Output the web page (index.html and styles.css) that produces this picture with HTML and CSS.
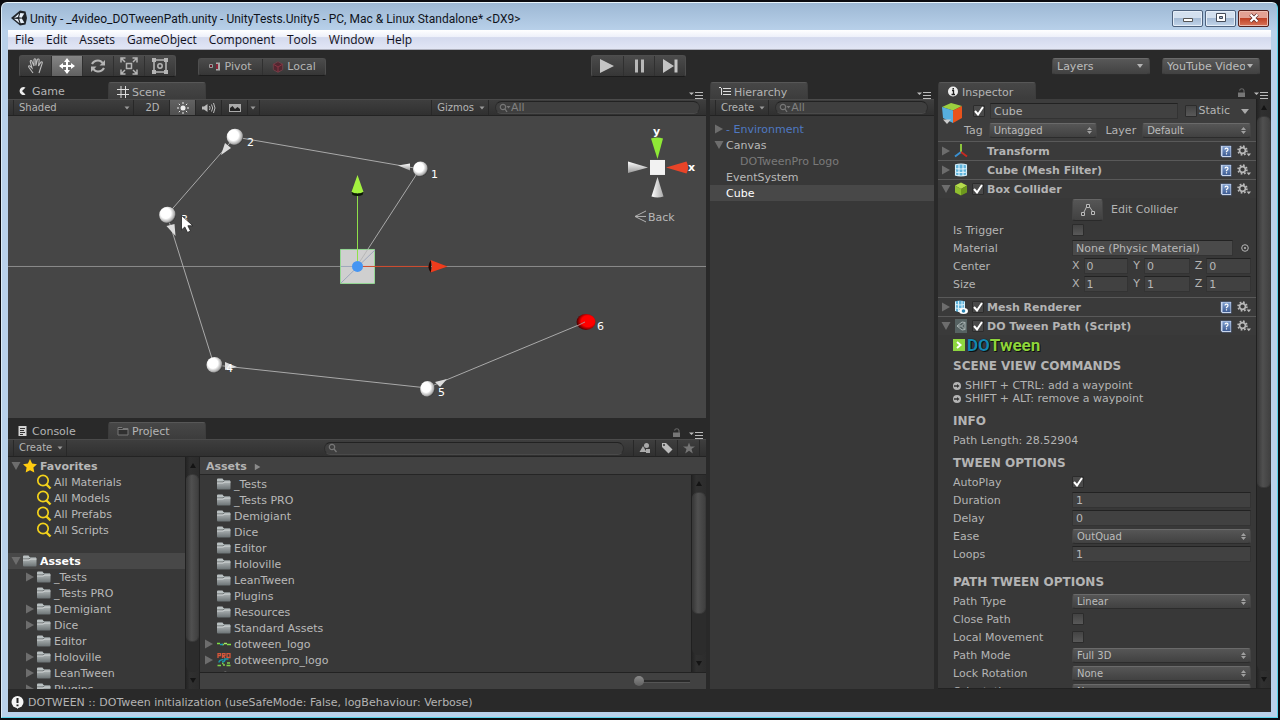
FILE: index.html
```html
<!DOCTYPE html>
<html lang="en">
<head>
<meta charset="utf-8">
<title>Unity - _4video_DOTweenPath.unity</title>
<link rel="stylesheet" href="styles.css">
</head>
<body>
<svg class="defs" aria-hidden="true">
  <defs>
    <linearGradient id="g-folder" x1="0" y1="0" x2="0" y2="1"><stop offset="0" stop-color="#b4babb"/><stop offset="1" stop-color="#6c7375"/></linearGradient>
    <linearGradient id="g-book" x1="0" y1="0" x2="0" y2="1"><stop offset="0" stop-color="#7f9fd0"/><stop offset="1" stop-color="#3e5c93"/></linearGradient>
    <linearGradient id="g-cone-h" x1="0" y1="0" x2="0" y2="1"><stop offset="0" stop-color="#fff"/><stop offset="1" stop-color="#999"/></linearGradient>
    <linearGradient id="g-cone-v" x1="0" y1="0" x2="1" y2="0"><stop offset="0" stop-color="#fff"/><stop offset="1" stop-color="#a8a8a8"/></linearGradient>
    <radialGradient id="g-ball" cx=".4" cy=".4" r=".62"><stop offset=".5" stop-color="#fff"/><stop offset=".85" stop-color="#aaa"/><stop offset="1" stop-color="#333"/></radialGradient>
    <radialGradient id="g-red" cx=".6" cy=".45" r=".62"><stop offset=".55" stop-color="#f00"/><stop offset="1" stop-color="#300"/></radialGradient>
  </defs>
  <symbol id="folder" viewBox="0 0 14 12"><path d="M0 1.500Q0 .500 1 .500h4.500l1 1.500H13v2H0z" fill="#b9c0c1"/><path d="M0 3.200h13.500v7.300q0 1-1 1H1q-1 0-1-1z" fill="url(#g-folder)"/><path d="M0 4h6l1-1.200h6.500" fill="none" stroke="#4b5052" stroke-width=".7"/><path d="M0 5h6.500l1-1h6" fill="none" stroke="#dde1e2" stroke-width=".8"/></symbol>
  <symbol id="lens" viewBox="0 0 16 16"><circle cx="7" cy="6.500" r="5.200" fill="none" stroke="#f3d21b" stroke-width="1.700"/><path d="M10.500 10.500l4 4" stroke="#f3d21b" stroke-width="2.400"/></symbol>
  <symbol id="search" viewBox="0 0 12 10"><circle cx="4" cy="4" r="2.700" fill="none" stroke="#777" stroke-width="1.200"/><path d="M6 6l2.500 3" stroke="#777" stroke-width="1.300"/></symbol>
  <symbol id="search-menu" viewBox="0 0 12 10"><circle cx="4" cy="4" r="2.700" fill="none" stroke="#777" stroke-width="1.200"/><path d="M6 6l2 3" stroke="#777" stroke-width="1.300"/><path d="M7.500 3h4l-2 2.500z" fill="#777"/></symbol>
  <symbol id="closed" viewBox="0 0 10 10"><path d="M1 .500v9l8-4.500z" fill="#6d6d6d"/></symbol>
  <symbol id="open" viewBox="0 0 10 10"><path d="M.500 1h9L5 9z" fill="#6d6d6d"/></symbol>
  <symbol id="drop" viewBox="0 0 6 4"><path d="M.500.500h5L3 3.500z" fill="#999"/></symbol>
  <symbol id="panel-menu" viewBox="0 0 14 8"><path d="M0 1.500h5L2.500 4z" fill="#bbb"/><path d="M6 1.500h8M6 4.500h8M6 7.500h8" stroke="#bbb"/></symbol>
  <symbol id="lock" viewBox="0 0 9 10"><path d="M1 4.500h7V9H1z" fill="#777"/><path d="M7 5V2.500Q6.500.700 4.800.700T2.500 2.500" fill="none" stroke="#666" stroke-width="1.100"/></symbol>
  <symbol id="book" viewBox="0 0 12 13"><path d="M.500.500h10l1 1v11h-9l-2-1.500z" fill="#c9d6ec" stroke="#222c42" stroke-width=".6"/><path d="M2.500 1.500h8v9.500h-8z" fill="url(#g-book)"/><path d="M5 4.500q0-1.300 1.500-1.300T8 4.600 6.500 6.300v1M6.500 8.300v1.200" fill="none" stroke="#fff" stroke-width="1.200"/></symbol>
  <symbol id="gear" viewBox="0 0 14 12"><circle cx="5.500" cy="5.500" r="2.900" fill="none" stroke="#b8b8b8" stroke-width="1.600"/><circle cx="5.500" cy="5.500" r="4.400" fill="none" stroke="#b8b8b8" stroke-width="1.700" stroke-dasharray="1.700 1.756"/><path d="M9.500 8.500H14l-2.200 2.800z" fill="#b8b8b8"/></symbol>
  <symbol id="arrow-disc" viewBox="0 0 8 8"><circle cx="4" cy="4" r="4" fill="#b4b4b4"/><path d="M1 3.300h3V2L6.500 4 4 6V4.700H1z" fill="#333"/></symbol>
</svg>

<div class="window">
  <header class="titlebar">
    <svg class="app-icon" viewBox="0 0 16 16" width="16" height="16"><path d="M0 8L9 .500l5.500 1L16 8l-1.500 6.500-5.500 1z" fill="#20242a"/><path d="M3 8l5-4.500L7 7zM3 8.700l4 .300 1.500 4.300zM9.300 3l4 .500-2.600 4.200-2.600-.400zM8.200 8.800l2.600-.300 2.600 4.300-3.700.500z" fill="#e8f1fa"/></svg>
    <h1 class="title">Unity - _4video_DOTweenPath.unity - UnityTests.Unity5 - PC, Mac &amp; Linux Standalone* &lt;DX9&gt;</h1>
    <button class="win-btn" aria-label="Minimize"><svg viewBox="0 0 12 10" width="12" height="10"><path d="M1.500 5.500h9v3h-9z" fill="#fff" stroke="#555"/></svg></button>
    <button class="win-btn" aria-label="Maximize"><svg viewBox="0 0 12 10" width="12" height="10"><path d="M1.500.500h9v8h-9z" fill="#fff" stroke="#444b58"/><path d="M4.500 3.500h3v2h-3z" fill="#9fb4cf" stroke="#444b58"/></svg></button>
    <button class="win-btn win-close" aria-label="Close"><svg viewBox="0 0 12 10" width="12" height="10"><path d="M2.500 1.500l7 7M9.500 1.500l-7 7" stroke="#5c2a26" stroke-width="3.600"/><path d="M2.500 1.500l7 7M9.500 1.500l-7 7" stroke="#fff" stroke-width="2.200"/></svg></button>
  </header>
  <nav class="menubar">
    <button>File</button><button>Edit</button><button>Assets</button><button>GameObject</button><button>Component</button><button>Tools</button><button>Window</button><button>Help</button>
  </nav>

  <div class="app">
    <div class="toolbar">
      <div class="toolbar-side">
        <div class="btn-group tools">
          <button aria-label="Hand"><svg viewBox="0 0 18 18" width="18" height="18"><path d="M6 16L2 10.500Q1 8.500 2.500 8.700L5 11 3.200 4.500Q3.500 3 4.700 3.800L7 9V2.500Q7.800 1 8.800 2.500V8.500L10.500 2.200Q12 1.500 12.200 3L11.500 9 14 5Q15.500 4.500 15.300 6L13 13l-1 3" fill="none" stroke="#bdbdbd" stroke-width="1.100"/></svg></button>
          <button class="active" aria-label="Move"><svg viewBox="0 0 16 16" width="16" height="16"><path d="M8 1v14M1 8h14" stroke="#fff" stroke-width="2"/><path d="M8 0l3 4H5zM8 16l3-4H5zM0 8l4-3v6zM16 8l-4-3v6z" fill="#fff"/></svg></button>
          <button aria-label="Rotate"><svg viewBox="0 0 16 16" width="16" height="16"><path d="M2 6Q4 2.500 8 2.500q3 0 4.500 2.500M14 10q-2 3.500-6 3.500-3 0-4.500-2.500" fill="none" stroke="#b5b5b5" stroke-width="2.200"/><path d="M15 2v5.500H9.500zM1 14V8.500h5.500z" fill="#b5b5b5"/></svg></button>
          <button aria-label="Scale"><svg viewBox="0 0 18 18" width="18" height="18"><path d="M6.500 6.500h5v5h-5z" fill="none" stroke="#b5b5b5" stroke-width="1.500"/><path d="M1 5.500V1h4.500M12.500 1H17v4.500M17 12.500V17h-4.500M5.500 17H1v-4.500M1 1l4 4M17 1l-4 4M17 17l-4-4M1 17l4-4" fill="none" stroke="#b5b5b5" stroke-width="1.500"/></svg></button>
          <button aria-label="Rect"><svg viewBox="0 0 18 18" width="18" height="18"><path d="M3 3h12v12H3z" fill="none" stroke="#b5b5b5" stroke-width="1.600"/><circle cx="9" cy="9" r="2.200" fill="none" stroke="#b5b5b5" stroke-width="1.500"/><path d="M1 1h4v4H1zM13 1h4v4h-4zM1 13h4v4H1zM13 13h4v4h-4z" fill="#b5b5b5"/></svg></button>
        </div>
        <div class="btn-group pivots">
          <button><svg viewBox="0 0 12 10" width="12" height="10"><path d="M.500 2.500h3v3h-3z" fill="#6d1a2a" stroke="#999"/><path d="M7 .500h4v8H7z" fill="#aaa"/><path d="M7 2h2v5H7z" fill="#8d2438"/></svg>Pivot</button>
          <button><svg viewBox="0 0 12 12" width="12" height="12"><path d="M6 .700l4.700 2.500v5.500L6 11.300 1.300 8.700V3.200z" fill="#532630" stroke="#6d4048"/><path d="M1.300 3.200L6 6l4.700-2.800M6 6v5" fill="none" stroke="#8a3443"/></svg>Local</button>
        </div>
      </div>
      <div class="btn-group play">
        <button aria-label="Play"><svg viewBox="0 0 16 14" width="16" height="14"><path d="M1 0v14l14-7z" fill="#c4c4c4"/></svg></button>
        <button aria-label="Pause"><svg viewBox="0 0 16 14" width="16" height="14"><path d="M4 .500h3v13H4zM10 .500h3v13h-3z" fill="#b9b9b9"/></svg></button>
        <button aria-label="Step"><svg viewBox="0 0 16 14" width="16" height="14"><path d="M1 0v14l11-7zM12.500.500h3v13h-3z" fill="#c4c4c4"/></svg></button>
      </div>
      <div class="toolbar-side end">
        <select class="drop top-drop" aria-label="Layers"><option>Layers</option></select>
        <select class="drop top-drop" aria-label="Layout"><option>YouTube Video</option></select>
      </div>
    </div>

    <main class="workspace">
      <div class="left-column">
        <section class="panel scene-panel">
          <div class="tabs">
            <button class="tab"><svg viewBox="0 0 12 12" width="12" height="12"><path d="M8.500 2.500A4 4 0 1 0 8.500 9.500L5 6z" fill="#eee"/></svg>Game</button>
            <button class="tab active"><svg viewBox="0 0 12 12" width="12" height="12"><path d="M4 0v12M8.500 0v12M0 3.500h12M0 8.500h12" stroke="#ddd"/></svg>Scene</button>
            <svg class="tab-menu" viewBox="0 0 14 8" width="14" height="8"><use href="#panel-menu"/></svg>
          </div>
          <div class="bar scene-bar">
            <button class="bar-btn shaded">Shaded<svg viewBox="0 0 6 4" width="6" height="4"><use href="#drop"/></svg></button>
            <button class="bar-btn two-d">2D</button>
            <button class="bar-btn icon on" aria-label="Lighting"><svg viewBox="0 0 12 12" width="12" height="12"><circle cx="6" cy="6" r="2.500" fill="#eee"/><path d="M6 0v2M6 10v2M0 6h2M10 6h2M1.800 1.800l1.300 1.300M8.900 8.900l1.300 1.300M1.800 10.200l1.300-1.300M8.900 3.100l1.300-1.300" stroke="#eee"/></svg></button>
            <button class="bar-btn icon" aria-label="Audio"><svg viewBox="0 0 14 12" width="14" height="12"><path d="M0 4.500h2L5.500 2v8L2 7.500H0z" fill="#bbb"/><path d="M7.500 4q1.200 2 0 4M9.500 2.500q2.400 3.500 0 7M11.500 1q3 5 0 10" fill="none" stroke="#bbb"/></svg></button>
            <button class="bar-btn icon" aria-label="Effects"><svg viewBox="0 0 12 10" width="12" height="10"><path d="M0 1h12v8H0z" fill="#aaa"/><path d="M1 8V5l2.500-2L6 6l2.500-2L11 6V2v6z" fill="#222"/></svg></button>
            <button class="bar-btn tiny" aria-label="Effects menu"><svg viewBox="0 0 6 4" width="6" height="4"><use href="#drop"/></svg></button>
            <span class="grow"></span>
            <button class="bar-btn">Gizmos<svg viewBox="0 0 6 4" width="6" height="4"><use href="#drop"/></svg></button>
            <label class="search scene-search"><svg viewBox="0 0 12 10" width="12" height="10"><use href="#search-menu"/></svg><input type="text" value="All" aria-label="Search scene"></label>
          </div>
          <svg class="scene" viewBox="8 116 698 302" preserveAspectRatio="xMidYMid slice">
            <path d="M0 266.500h720" stroke="#8d8d8d"/>
            <path d="M340.500 249.500h34v34h-34z" fill="#cfcfcf" stroke="#93d893"/>
            <path d="M341 283l34-33M341 266.500h16" stroke="#9ea7bb" fill="none"/>
            <path d="M357 266L420 169 235 137 167 215 214 365 427 388 586 322" fill="none" stroke="#b4b4b4" stroke-width=".9"/>
            <path d="M357.500 266V193" stroke="#8fe04a"/><path d="M357.500 175l6 17q-6 3-12 0z" fill="#a3f23f"/><path d="M351.500 192q6 3 12 0l-1 3q-5 2-10 0z" fill="#0b1c02"/>
            <path d="M357 266.500h73" stroke="#cf4a2c"/><path d="M431 260q-5 6.500 0 13z" fill="#210500"/><path d="M430.500 260l17 6.500-17 6q3-6 0-12.500z" fill="#f03c1c"/>
            <circle cx="357.500" cy="266.500" r="5.500" fill="#4595f2"/>
            <path d="M398 165.500l12-2v7z" fill="url(#g-cone-h)"/><path d="M221 155l4-12 6 5z" fill="#ddd"/><path d="M166.500 226l8-2 1 12z" fill="#ddd"/><path d="M225 362v8l12-3z" fill="#ddd"/><path d="M435 382l12-3-7 8z" fill="#ddd"/>
            <circle cx="420.500" cy="169" r="7.500" fill="url(#g-ball)"/><circle cx="235" cy="137" r="8.300" fill="url(#g-ball)"/><circle cx="167.500" cy="215" r="8.300" fill="url(#g-ball)"/><circle cx="214.500" cy="365" r="8" fill="url(#g-ball)"/><ellipse cx="427.500" cy="389" rx="7.300" ry="8" fill="url(#g-ball)"/><ellipse cx="586" cy="322" rx="9.500" ry="8" fill="url(#g-red)"/>
            <path d="M577 326l8-4" stroke="#b88"/>
            <g class="node-label"><text x="431" y="178">1</text><text x="247" y="146">2</text><text x="181" y="223">3</text><text x="226" y="372">4</text><text x="438" y="396">5</text><text x="597" y="330">6</text></g>
            <path d="M181.500 215.500v14.500l3.300-3 2.700 5.500 3-1.400-2.600-5.300h5z" fill="#fff" stroke="#222" stroke-width=".8"/>
            <path d="M651 138.500q6-2 12 0L657.500 159z" fill="#8fe836"/><path d="M686.500 161.500q3 6 0 12L666 167.500z" fill="#e84428"/><path d="M628 161.500l20 6-20 5.500z" fill="url(#g-cone-h)"/><path d="M657.500 177l6 19.500q-6 2-12 0z" fill="url(#g-cone-v)"/><path d="M650 160h15v15h-15z" fill="#f2f2f2"/>
            <g class="axis-label"><text x="653" y="135">y</text><text x="688" y="171">x</text></g>
            <path d="M646 211l-11 5.500 11 5.500M635 216.500h11" fill="none" stroke="#b2b2b2"/>
            <text class="view-label" x="648" y="221">Back</text>
          </svg>
        </section>

        <section class="panel project-panel">
          <div class="tabs">
            <button class="tab"><svg viewBox="0 0 12 12" width="12" height="12"><path d="M1.500 1h8v10h-8z" fill="#d5d5d5"/><path d="M3 3.500h5M3 5.500h4M3 7.500h5M3 9.500h3" stroke="#333"/></svg>Console</button>
            <button class="tab active"><svg viewBox="0 0 12 12" width="12" height="12"><path d="M1 2.500h4l1 1h5v6.500H1z" fill="#303030" stroke="#777"/><path d="M1 4.500h10" stroke="#777"/></svg>Project</button>
            <svg class="tab-lock" viewBox="0 0 9 10" width="9" height="10"><use href="#lock"/></svg>
            <svg class="tab-menu" viewBox="0 0 14 8" width="14" height="8"><use href="#panel-menu"/></svg>
          </div>
          <div class="bar project-bar">
            <button class="bar-btn">Create<svg viewBox="0 0 6 4" width="6" height="4"><use href="#drop"/></svg></button>
            <span class="grow"></span>
            <label class="search project-search"><svg viewBox="0 0 12 10" width="12" height="10"><use href="#search"/></svg><input type="text" aria-label="Search project"></label>
            <button class="bar-btn icon" aria-label="Filter by type"><svg viewBox="0 0 12 12" width="12" height="12"><circle cx="7.500" cy="3.500" r="2.500" fill="#aaa"/><path d="M4 4l3.500 6H.500zM7 7h4v4H7z" fill="#aaa"/></svg></button>
            <button class="bar-btn icon" aria-label="Filter by label"><svg viewBox="0 0 12 12" width="12" height="12"><path d="M1 1h4l6.500 6.500-4 4L1 5z" fill="#bbb"/><circle cx="3" cy="3" r="1" fill="#333"/></svg></button>
            <button class="bar-btn icon" aria-label="Save search"><svg viewBox="0 0 12 12" width="12" height="12"><path d="M6 .500l1.500 4H12L8.500 7l1.300 4.500L6 8.800 2.200 11.500 3.500 7 0 4.500h4.500z" fill="#757575"/></svg></button>
          </div>
          <div class="project-body">
            <div class="tree-wrap">
              <ul class="list tree">
                <li class="row strong"><svg class="fold" viewBox="0 0 10 10"><use href="#open"/></svg><svg class="ico" viewBox="0 0 14 14"><path d="M7 0l2.100 4.600 4.900.600-3.600 3.400.900 5L7 11.200 2.700 13.600l.900-5L0 5.200l4.900-.600z" fill="#fc1"/></svg>Favorites</li>
                <li class="row child lens"><svg class="ico" viewBox="0 0 16 16"><use href="#lens"/></svg>All Materials</li>
                <li class="row child lens"><svg class="ico" viewBox="0 0 16 16"><use href="#lens"/></svg>All Models</li>
                <li class="row child lens"><svg class="ico" viewBox="0 0 16 16"><use href="#lens"/></svg>All Prefabs</li>
                <li class="row child lens"><svg class="ico" viewBox="0 0 16 16"><use href="#lens"/></svg>All Scripts</li>
                <li class="row strong selected spaced"><svg class="fold" viewBox="0 0 10 10"><use href="#open"/></svg><svg class="ico" viewBox="0 0 14 12"><use href="#folder"/></svg>Assets</li>
                <li class="row child"><svg class="fold" viewBox="0 0 10 10"><use href="#closed"/></svg><svg class="ico" viewBox="0 0 14 12"><use href="#folder"/></svg>_Tests</li>
                <li class="row child"><svg class="fold"></svg><svg class="ico" viewBox="0 0 14 12"><use href="#folder"/></svg>_Tests PRO</li>
                <li class="row child"><svg class="fold" viewBox="0 0 10 10"><use href="#closed"/></svg><svg class="ico" viewBox="0 0 14 12"><use href="#folder"/></svg>Demigiant</li>
                <li class="row child"><svg class="fold" viewBox="0 0 10 10"><use href="#closed"/></svg><svg class="ico" viewBox="0 0 14 12"><use href="#folder"/></svg>Dice</li>
                <li class="row child"><svg class="fold"></svg><svg class="ico" viewBox="0 0 14 12"><use href="#folder"/></svg>Editor</li>
                <li class="row child"><svg class="fold" viewBox="0 0 10 10"><use href="#closed"/></svg><svg class="ico" viewBox="0 0 14 12"><use href="#folder"/></svg>Holoville</li>
                <li class="row child"><svg class="fold" viewBox="0 0 10 10"><use href="#closed"/></svg><svg class="ico" viewBox="0 0 14 12"><use href="#folder"/></svg>LeanTween</li>
                <li class="row child"><svg class="fold" viewBox="0 0 10 10"><use href="#closed"/></svg><svg class="ico" viewBox="0 0 14 12"><use href="#folder"/></svg>Plugins</li>
              </ul>
              <div class="scrollbar slim"><span class="up"></span><span class="track"><span class="thumb" style="height:85%"></span></span><span class="down"></span></div>
            </div>
            <div class="assets">
              <div class="crumb">Assets<svg viewBox="0 0 10 10" width="8" height="8"><path d="M1 1v8l7-4z" fill="#8a8a8a"/></svg></div>
              <div class="assets-wrap">
                <ul class="list files">
                  <li class="row"><svg class="fold"></svg><svg class="ico" viewBox="0 0 14 12"><use href="#folder"/></svg>_Tests</li>
                  <li class="row"><svg class="fold"></svg><svg class="ico" viewBox="0 0 14 12"><use href="#folder"/></svg>_Tests PRO</li>
                  <li class="row"><svg class="fold"></svg><svg class="ico" viewBox="0 0 14 12"><use href="#folder"/></svg>Demigiant</li>
                  <li class="row"><svg class="fold"></svg><svg class="ico" viewBox="0 0 14 12"><use href="#folder"/></svg>Dice</li>
                  <li class="row"><svg class="fold"></svg><svg class="ico" viewBox="0 0 14 12"><use href="#folder"/></svg>Editor</li>
                  <li class="row"><svg class="fold"></svg><svg class="ico" viewBox="0 0 14 12"><use href="#folder"/></svg>Holoville</li>
                  <li class="row"><svg class="fold"></svg><svg class="ico" viewBox="0 0 14 12"><use href="#folder"/></svg>LeanTween</li>
                  <li class="row"><svg class="fold"></svg><svg class="ico" viewBox="0 0 14 12"><use href="#folder"/></svg>Plugins</li>
                  <li class="row"><svg class="fold"></svg><svg class="ico" viewBox="0 0 14 12"><use href="#folder"/></svg>Resources</li>
                  <li class="row"><svg class="fold"></svg><svg class="ico" viewBox="0 0 14 12"><use href="#folder"/></svg>Standard Assets</li>
                  <li class="row"><svg class="fold" viewBox="0 0 10 10"><use href="#closed"/></svg><svg class="ico" viewBox="0 0 14 12"><path d="M0 5.500h3M5 6.500h2M10 6.500h4" stroke="#7fe043" stroke-width="1.500"/><path d="M3 6.500h3" stroke="#1c9fb5" stroke-width="1.500"/><path d="M7 5.500h3" stroke="#a8e86a" stroke-width="1.500"/></svg>dotween_logo</li>
                  <li class="row"><svg class="fold" viewBox="0 0 10 10"><use href="#closed"/></svg><svg class="ico tall" viewBox="0 0 14 14"><path d="M1 5V.700h2.500v2H1M5.500 5V.700H8v2H6L8 5M10 .700h3v3.800h-3z" fill="none" stroke="#d4563a" stroke-width="1.300"/><path d="M6.500 6.500Q2 7 2 9.500M5 9q3 0 3-3h3.500" fill="none" stroke="#1798ab" stroke-width="1.500"/><path d="M.500 12.500h3.500M6 12h2M9.500 12.500h4M5 10.500h1.500M10 10h3" stroke="#7fd04a" stroke-width="1.300"/></svg>dotweenpro_logo</li>
                  <li class="row"><svg class="fold"></svg><svg class="ico" viewBox="0 0 14 14"><circle cx="8.500" cy="7" r="5" fill="#ddd"/></svg>dotweenpro_icon mat</li>
                </ul>
                <div class="scrollbar"><span class="up"></span><span class="track"><span class="thumb" style="height:75%"></span></span><span class="down"></span></div>
              </div>
              <div class="zoom-foot"><input type="range" min="0" max="100" value="0" aria-label="Icon size"></div>
            </div>
          </div>
        </section>
      </div>

      <section class="panel hierarchy">
        <div class="tabs">
          <button class="tab active"><svg viewBox="0 0 12 12" width="12" height="12"><path d="M0 1.500h2M4 2.500h8M4 5.500h8M4 8.500h8M2.500 2v7" stroke="#ddd"/></svg>Hierarchy</button>
          <svg class="tab-menu" viewBox="0 0 14 8" width="14" height="8"><use href="#panel-menu"/></svg>
        </div>
        <div class="bar">
          <button class="bar-btn">Create<svg viewBox="0 0 6 4" width="6" height="4"><use href="#drop"/></svg></button>
          <label class="search grow-search"><svg viewBox="0 0 12 10" width="12" height="10"><use href="#search-menu"/></svg><input type="text" value="All" aria-label="Search hierarchy"></label>
        </div>
        <ul class="list objects">
          <li class="row prefab"><svg class="fold" viewBox="0 0 10 10"><use href="#closed"/></svg>- Environment</li>
          <li class="row"><svg class="fold" viewBox="0 0 10 10"><use href="#open"/></svg>Canvas</li>
          <li class="row inactive">DOTweenPro Logo</li>
          <li class="row"><svg class="fold"></svg>EventSystem</li>
          <li class="row selected"><svg class="fold"></svg>Cube</li>
        </ul>
      </section>

      <section class="panel inspector">
        <div class="tabs">
          <button class="tab active"><svg viewBox="0 0 12 12" width="12" height="12"><circle cx="6" cy="5.500" r="5" fill="#eee"/><path d="M5 4.500h1.500v4M4.500 8.500h3.500" fill="none" stroke="#222" stroke-width="1.300"/><path d="M5.500 2h1.500v1.400H5.500z" fill="#222"/></svg>Inspector</button>
          <svg class="tab-lock" viewBox="0 0 9 10" width="9" height="10"><use href="#lock"/></svg>
          <svg class="tab-menu" viewBox="0 0 14 8" width="14" height="8"><use href="#panel-menu"/></svg>
        </div>
        <div class="inspector-body">
          <div class="props">
            <div class="object-head">
              <svg class="cube" viewBox="0 0 22 24" width="22" height="24"><path d="M1 4l9-4 11 3-9 4.500z" fill="#9ccf3f"/><path d="M1 4l11 3.500V20L2 15z" fill="#56aede"/><path d="M12 7.500L21 3v12l-9 5z" fill="#e8531c"/><path d="M2 16.500h8L6 21z" fill="#ccc"/></svg>
              <div class="head-rows">
                <div class="head-row"><input class="check" type="checkbox" checked aria-label="Active"><input class="field grow" type="text" value="Cube" aria-label="Name"><label class="static"><input class="check" type="checkbox">Static</label><svg viewBox="0 0 10 6" width="8" height="5"><path d="M0 0h10L5 6z" fill="#aaa"/></svg></div>
                <div class="head-row tags"><label for="tag">Tag</label><select id="tag" class="drop updown"><option>Untagged</option></select><label for="layer">Layer</label><select id="layer" class="drop updown"><option>Default</option></select></div>
              </div>
            </div>

            <div class="comp-head"><svg class="fold" viewBox="0 0 10 10"><use href="#closed"/></svg><svg class="comp-ico" viewBox="0 0 14 14"><path d="M7 0v8" stroke="#8cc63c" stroke-width="2"/><path d="M7 8l-6 4.500" stroke="#3a8fd0" stroke-width="2"/><path d="M7 8l6 4.500" stroke="#c52a20" stroke-width="2"/></svg><span class="check-gap"></span><h2>Transform</h2><svg class="book" viewBox="0 0 12 13"><use href="#book"/></svg><svg class="gear" viewBox="0 0 14 12"><use href="#gear"/></svg></div>
            <div class="comp-head"><svg class="fold" viewBox="0 0 10 10"><use href="#closed"/></svg><svg class="comp-ico" viewBox="0 0 14 14"><path d="M1 2q6-2 12 0v10q-6 2-12 0z" fill="#5fb4dc"/><path d="M1 5.500q6 1 12 0M1 9q6 1 12 0M5 1v12M9 1v12M1.500 2v10M12.500 2v10M1 2q6-2 12 0M1 12q6 2 12 0" fill="none" stroke="#d8f0fb" stroke-width="1.100"/></svg><span class="check-gap"></span><h2>Cube (Mesh Filter)</h2><svg class="book" viewBox="0 0 12 13"><use href="#book"/></svg><svg class="gear" viewBox="0 0 14 12"><use href="#gear"/></svg></div>
            <div class="comp-head"><svg class="fold" viewBox="0 0 10 10"><use href="#open"/></svg><svg class="comp-ico" viewBox="0 0 14 14"><path d="M7 .500l6 3-6 3.500-6-3.500z" fill="#b5dc4c"/><path d="M1 3.500L7 7v6.500L1 10.500z" fill="#8fbe2f"/><path d="M13 3.500L7 7v6.500l6-3z" fill="#6d981d"/></svg><input class="check" type="checkbox" checked aria-label="Box Collider enabled"><h2>Box Collider</h2><svg class="book" viewBox="0 0 12 13"><use href="#book"/></svg><svg class="gear" viewBox="0 0 14 12"><use href="#gear"/></svg></div>
            <div class="comp-body collider">
              <div class="edit-row"><button id="edit" class="edit-btn" aria-label="Edit Collider"><svg viewBox="0 0 16 14" width="16" height="14"><path d="M3 11l4-8M9 3l4 6" fill="none" stroke="#bbb"/><path d="M6.500 1.500h3v3h-3zM1.500 9.500h3v3h-3zM11.500 8.500h3v3h-3z" fill="#444" stroke="#bbb"/></svg></button><label for="edit">Edit Collider</label></div>
              <div class="prop"><label for="trig">Is Trigger</label><input id="trig" class="check" type="checkbox"></div>
              <div class="prop"><label for="mat">Material</label><span class="object-pick"><input id="mat" class="field object" type="text" value="None (Physic Material)"><svg viewBox="0 0 8 8" width="8" height="8"><circle cx="4" cy="4" r="3.300" fill="none" stroke="#b5b5b5"/><circle cx="4" cy="4" r="1.100" fill="#b5b5b5"/></svg></span></div>
              <div class="prop"><span class="name">Center</span><span class="vec"><label>X<input class="field" type="text" value="0"></label><label>Y<input class="field" type="text" value="0"></label><label>Z<input class="field" type="text" value="0"></label></span></div>
              <div class="prop"><span class="name">Size</span><span class="vec"><label>X<input class="field" type="text" value="1"></label><label>Y<input class="field" type="text" value="1"></label><label>Z<input class="field" type="text" value="1"></label></span></div>
            </div>
            <div class="comp-head"><svg class="fold" viewBox="0 0 10 10"><use href="#closed"/></svg><svg class="comp-ico" viewBox="0 0 14 14"><path d="M1 1.500q5-2 10 0V11q-5 2-10 0z" fill="#5fb4dc"/><path d="M1 4.500q5 1 10 0M1 8q5 1 10 0M4.500 1v11M8 1v11M1.500 1.500V11M10.500 1.500V11" fill="none" stroke="#d8f0fb"/><ellipse cx="9.500" cy="11" rx="4.500" ry="3" fill="#fff"/><circle cx="9.500" cy="11" r="1.800" fill="#2c86b4"/></svg><input class="check" type="checkbox" checked aria-label="Mesh Renderer enabled"><h2>Mesh Renderer</h2><svg class="book" viewBox="0 0 12 13"><use href="#book"/></svg><svg class="gear" viewBox="0 0 14 12"><use href="#gear"/></svg></div>
            <div class="comp-head"><svg class="fold" viewBox="0 0 10 10"><use href="#open"/></svg><svg class="comp-ico" viewBox="0 0 14 14"><path d="M1 0h12v14H1z" fill="#566262"/><path d="M3 7l5-4 3 .500V10.500L8 11zM3 7h4.500l3.500-3.500M7.500 7l3.500 3.500" fill="none" stroke="#a9b3b3"/></svg><input class="check" type="checkbox" checked aria-label="DO Tween Path enabled"><h2>DO Tween Path (Script)</h2><svg class="book" viewBox="0 0 12 13"><use href="#book"/></svg><svg class="gear" viewBox="0 0 14 12"><use href="#gear"/></svg></div>
            <div class="comp-body">
              <div class="logo"><svg viewBox="0 0 12 12" width="12" height="12"><path d="M0 0h12v12H0z" fill="#8ed63f"/><path d="M4 3l3.500 3L4 9" fill="none" stroke="#fff" stroke-width="2"/></svg><span class="logo-do">DO</span><span class="logo-tween">Tween</span></div>
              <h3>SCENE VIEW COMMANDS</h3>
              <ul class="hints">
                <li><svg viewBox="0 0 8 8" width="8" height="8"><use href="#arrow-disc"/></svg>SHIFT + CTRL: add a waypoint</li>
                <li><svg viewBox="0 0 8 8" width="8" height="8"><use href="#arrow-disc"/></svg>SHIFT + ALT: remove a waypoint</li>
              </ul>
              <h3>INFO</h3>
              <p class="info">Path Length: 28.52904</p>
              <h3>TWEEN OPTIONS</h3>
              <div class="group">
                <div class="prop"><label for="auto">AutoPlay</label><input id="auto" class="check" type="checkbox" checked></div>
                <div class="prop"><label for="dur">Duration</label><input id="dur" class="field" type="text" value="1"></div>
                <div class="prop"><label for="delay">Delay</label><input id="delay" class="field" type="text" value="0"></div>
                <div class="prop"><label for="ease">Ease</label><select id="ease" class="drop updown"><option>OutQuad</option></select></div>
                <div class="prop"><label for="loops">Loops</label><input id="loops" class="field" type="text" value="1"></div>
              </div>
              <h3>PATH TWEEN OPTIONS</h3>
              <div class="group">
                <div class="prop"><label for="ptype">Path Type</label><select id="ptype" class="drop updown"><option>Linear</option></select></div>
                <div class="prop"><label for="close">Close Path</label><input id="close" class="check" type="checkbox"></div>
                <div class="prop"><label for="local">Local Movement</label><input id="local" class="check" type="checkbox"></div>
                <div class="prop"><label for="mode">Path Mode</label><select id="mode" class="drop updown"><option>Full 3D</option></select></div>
                <div class="prop"><label for="lockrot">Lock Rotation</label><select id="lockrot" class="drop updown"><option>None</option></select></div>
                <div class="prop"><label for="orient">Orientation</label><select id="orient" class="drop updown"><option>None</option></select></div>
              </div>
            </div>
          </div>
          <div class="scrollbar"><span class="up"></span><span class="track"><span class="thumb" style="height:67%"></span></span><span class="down"></span></div>
        </div>
      </section>
    </main>

    <footer class="status"><svg viewBox="0 0 13 13" width="13" height="13"><circle cx="6.500" cy="6" r="6" fill="#f4f4f4"/><path d="M5 11h3l-1.500 2z" fill="#f4f4f4"/><path d="M6.500 2v5M6.500 8.500v1.800" stroke="#222" stroke-width="2"/></svg>DOTWEEN :: DOTween initialization (useSafeMode: False, logBehaviour: Verbose)</footer>
  </div>
</div>
</body>
</html>
```
FILE: styles.css
```css
* { box-sizing: border-box; }
html, body { height: 100%; }
body {
  margin: 0;
  padding: 2px 2px 2px 1px;
  background: #0b0b10;
  color: #b4b4b4;
  font: 11px/16px "DejaVu Sans", sans-serif;
  overflow: hidden;
}
button, input, select { font: inherit; color: inherit; margin: 0; padding: 0; border: 0; background: none; min-width: 0; }
ul { list-style: none; margin: 0; padding: 0; }
h1, h2, h3, p { margin: 0; }
svg { flex: none; }
.defs { position: absolute; width: 0; height: 0; }

.window {
  height: 100%;
  display: flex;
  flex-direction: column;
  padding: 0 6px 5px;
  border: 1px solid #58d4e4;
  border-color: #e8f4fb #58d4ea #58d4ea #dcebf6;
  border-radius: 6px 6px 0 0;
  background: linear-gradient(#9db8d4, #b9d1ea 28px, #b9d1ea);
}

.titlebar { display: flex; align-items: center; gap: 2px; height: 27px; padding: 3px 2px 0 3px; color: #10141c; }
.title { flex: 1; min-width: 0; overflow: hidden; white-space: nowrap; font: 12px/18px Roboto, sans-serif; padding: 2px 0 0 1px; }
.win-btn {
  display: grid; place-items: center; width: 31px; height: 17px;
  border: 1px solid #4d617d; border-radius: 2px;
  background: linear-gradient(#d3e0ef 48%, #a5bbd5 50%, #c2d5ea);
  box-shadow: inset 0 0 0 1px #e5eef8;
}
.win-close { border-color: #54201c; background: linear-gradient(#e3a193 48%, #c04226 50%, #d8755a); box-shadow: inset 0 0 0 1px #ecbcb0; }

.menubar {
  display: flex; gap: 12px; height: 20px; padding: 0 7px;
  border-bottom: 1px solid #aeb0bc;
  background: linear-gradient(#fff, #eef1fa 35%, #d4daee 40%, #e2e6f5);
  color: #10101c; font: 12px/19px "Open Sans", sans-serif;
}

.app { flex: 1; min-height: 0; display: flex; flex-direction: column; background: #292929; }

.toolbar { display: grid; grid-template-columns: 1fr auto 1fr; align-items: center; height: 32px; padding: 0 11px; }
.toolbar-side { display: flex; align-items: center; gap: 22px; }
.toolbar-side.end { justify-content: flex-end; gap: 12px; }
.btn-group { display: flex; border-radius: 3px; overflow: hidden; border: 1px solid #4e4e4e; border-bottom-color: #1c1c1c; background: linear-gradient(#4b4b4b, #363636); }
.btn-group button { display: flex; align-items: center; justify-content: center; border-left: 1px solid #303030; }
.btn-group button:first-child { border-left: 0; }
.tools button, .play button { width: 31px; height: 20px; }
.play { margin-right: 3px; }
.tools .active { background: linear-gradient(#858585, #616161); }
.pivots { margin-top: 2px; }
.pivots button { width: 63px; height: 16px; gap: 3px; line-height: 16px; }

.drop {
  appearance: none; min-width: 0; height: 15px; padding: 0 16px 0 4px;
  border: 1px solid #616161; border-color: #6a6a6a #444 #2c2c2c; border-radius: 3px;
  color: #bcbcbc; font-size: 10px; line-height: 13px;
  background: url("data:image/svg+xml,%3Csvg xmlns='http://www.w3.org/2000/svg' width='6' height='4'%3E%3Cpath d='M0 0h6L3 4z' fill='%23b4b4b4'/%3E%3C/svg%3E") no-repeat right 6px center, linear-gradient(#585858, #414141);
}
.top-drop { width: 98px; height: 17px; font-size: 11px; line-height: 15px; padding-right: 14px; }
.updown { background: url("data:image/svg+xml,%3Csvg xmlns='http://www.w3.org/2000/svg' width='5' height='7'%3E%3Cpath d='M0 3h5L2.500 0zM0 4h5L2.500 7z' fill='%23a0a0a0'/%3E%3C/svg%3E") no-repeat right 4px center, linear-gradient(#565656, #414141); }

.workspace { flex: 1; min-height: 0; display: grid; grid-template-columns: minmax(0, 1fr) 224px 333px; gap: 4px; }
.left-column { min-height: 0; display: flex; flex-direction: column; gap: 4px; }
.panel { min-width: 0; min-height: 0; display: flex; flex-direction: column; background: #383838; }
.scene-panel { flex: 1; }
.project-panel { flex: 0 0 44%; }

.tabs { display: flex; align-items: flex-end; height: 17px; background: #292929; flex: none; }
.tab { display: flex; align-items: center; gap: 3px; width: 98px; height: 17px; padding: 3px 0 0 8px; border-radius: 3px 3px 0 0; line-height: 16px; }
.tab svg { margin-bottom: 2px; }
.tab.active { border: 1px solid #545454; border-bottom: 0; border-color: #575757 #3c3c3c; background: linear-gradient(#474747, #3c3c3c); }
.tab:first-child:not(.active) { width: 100px; padding-left: 9px; }
.tab-menu { margin: 0 3px 0 auto; }
.tab-lock { margin: 0 8px 1px auto; }
.tab-lock + .tab-menu { margin-left: 0; }

.bar { display: flex; align-items: stretch; flex: none; height: 17px; padding-left: 6px; border-top: 1px solid #4a4a4a; border-bottom: 1px solid #232323; background: linear-gradient(#3e3e3e, #303030); font-size: 10px; }
.bar-btn { display: flex; align-items: center; gap: 5px; padding: 0 3px 0 5px; border: solid #282828; border-width: 0 1px; margin-left: -1px; }
.shaded { width: 121px; justify-content: space-between; }
.two-d { width: 37px; justify-content: center; }
.bar-btn.icon { width: 27px; justify-content: center; padding: 0; }
.bar-btn.on { background: linear-gradient(#626262, #505050); }
.bar-btn.tiny { border-width: 0 1px 0 0; padding-left: 3px; }
.grow { flex: 1; }
.search { display: flex; align-items: center; gap: 0; height: 13px; margin: 1px 6px; padding: 0 3px; border: 1px solid #272727; border-color: #222 #2c2c2c #4a4a4a; border-radius: 7px; background: #3f3f3f; color: #808080; font-size: 11px; }
.search input { flex: 1; width: 0; height: 11px; line-height: 11px; outline: 0; }
.scene-search { flex: 0 1 205px; }
.grow-search { flex: 1; }
.project-bar { height: 18px; padding-right: 6px; }
.project-bar .bar-btn.icon { width: 23px; }
.project-search { flex: 0 1 300px; margin: 2px 10px 2px 0; }

.scene { flex: 1; display: block; width: 100%; min-height: 0; background: #464646; }
.node-label text { fill: #fff; font-size: 11px; }
.axis-label text { fill: #fff; font-size: 11px; font-weight: bold; }
.view-label { fill: #b8b8b8; font-size: 11px; }

.project-body { flex: 1; min-height: 0; display: grid; grid-template-columns: 191px minmax(0, 1fr); gap: 1px; background: #222; }
.tree-wrap { min-height: 0; overflow: hidden; display: flex; background: #383838; }
.list { flex: 1; min-width: 0; overflow: hidden; }
.row { display: flex; align-items: center; height: 16px; padding-top: 2px; white-space: nowrap; color: #b8b8b8; }
.fold { width: 10px; height: 10px; }
.ico { width: 14px; height: 12px; margin: 0 3px 0 2px; }
.row .fold, .row .ico { margin-bottom: 2px; }
.ico.tall { height: 14px; }
.tree { padding-top: 1px; }
.tree .row { padding-left: 3px; }
.tree .child { padding-left: 17px; }
.tree .lens { padding-left: 27px; }
.lens .ico { width: 16px; height: 16px; margin-right: 2px; margin-left: 1px; }
.strong { font-weight: bold; }
.strong .ico { height: 14px; }
.row.selected { background: #484848; color: #fff; }
.spaced { margin-top: 15px; }
.assets { min-width: 0; min-height: 0; display: flex; flex-direction: column; background: #383838; }
.crumb { display: flex; align-items: center; gap: 7px; height: 18px; padding: 3px 0 0 6px; font-weight: bold; background: #414141; border-bottom: 1px solid #252525; }
.assets-wrap { flex: 1; min-height: 0; display: flex; overflow: hidden; }
.files { padding: 1px 0 0 4px; }
.files .ico { margin-left: 3px; }
.zoom-foot { display: flex; justify-content: flex-end; align-items: center; height: 17px; padding-right: 16px; background: #414141; border-top: 1px solid #222; }
input[type="range"] { appearance: none; width: 56px; height: 12px; }
input[type="range"]::-webkit-slider-runnable-track { height: 3px; background: #2a2a2a; border-bottom: 1px solid #555; }
input[type="range"]::-webkit-slider-thumb { appearance: none; width: 10px; height: 10px; margin-top: -4px; border-radius: 50%; background: linear-gradient(#8a8a8a, #606060); }

.scrollbar { flex: none; width: 15px; display: flex; flex-direction: column; background: linear-gradient(90deg, #242424, #303030 30%, #2c2c2c); border-left: 1px solid #202020; }
.scrollbar.slim { width: 14px; }
.up, .down { height: 17px; display: grid; place-items: center; }
.up::before, .down::before { content: ""; border: 3px solid transparent; border-top: 0; border-bottom: 5px solid #141414; }
.down::before { transform: rotate(180deg); }
.track { flex: 1; min-height: 0; border-radius: 6px; background: #2c2c2c; }
.thumb { display: block; border-radius: 6px; border: 1px solid #3a3a3a; background: linear-gradient(90deg, #3a3a3a, #505050 40%, #404040); }

.objects { padding-top: 5px; }
.objects .row { padding-left: 4px; }
.objects .fold { margin-right: 2px; }
.row.prefab { color: #4f78c2; }
.objects .row.inactive { padding-left: 30px; color: #7a7a7a; }

.inspector-body { flex: 1; min-height: 0; display: flex; overflow: hidden; border-bottom: 1px solid #222; }
.props { flex: 1; min-width: 0; overflow: hidden; }
.object-head { display: flex; height: 42px; padding: 4px 5px 0 3px; background: #3d3d3d; }
.head-rows { flex: 1; min-width: 0; display: grid; grid-template-rows: 16px 17px; row-gap: 3px; }
.head-row { display: flex; align-items: center; gap: 5px; padding-left: 10px; }
.head-row > svg { margin: 0 2px 0 6px; }
.static { display: flex; align-items: center; gap: 2px; }
.static .check { margin-left: 2px; }
.tags { gap: 6px; padding-left: 1px; }
.tags .drop { flex: 1; }
.tags .drop + label { margin-left: 2px; }

.check { appearance: none; flex: none; width: 12px; height: 12px; border: 1px solid #2c2c2c; border-radius: 1px; background: linear-gradient(#434343, #595959); }
.check:checked { background: url("data:image/svg+xml,%3Csvg xmlns='http://www.w3.org/2000/svg' width='10' height='10'%3E%3Cpath d='M1 5l3 3.500L9 1' fill='none' stroke='white' stroke-width='2'/%3E%3C/svg%3E") no-repeat center, #4a4a4a; }
.field { height: 16px; padding: 0 3px; line-height: 14px; border: 1px solid #333; border-top-color: #222; background: #414141; color: #b8b8b8; outline: 0; }
.field.object { background: #4a4a4a; }

.comp-head { display: flex; align-items: center; height: 19px; padding: 0 5px 0 3px; border-top: 1px solid #595959; background: #3a3a3a; }
.comp-ico { width: 14px; height: 14px; margin: 0 4px 0 3px; }
.comp-head .check, .check-gap { width: 12px; margin: 0 3px 0 0; }
.comp-head h2 { flex: 1; min-width: 0; padding-top: 2px; font-size: 11px; line-height: 16px; white-space: nowrap; }
.book { width: 12px; height: 13px; margin-right: 5px; }
.gear { width: 14px; height: 12px; }

.comp-body { padding: 0 5px 0 15px; }
.collider { padding-bottom: 4px; }
.prop { display: grid; grid-template-columns: 119px minmax(0, 1fr); align-items: center; height: 18px; white-space: nowrap; }
.prop > label, .name { padding-top: 2px; }
.edit-row { display: flex; align-items: center; gap: 8px; height: 23px; padding-left: 119px; }
.edit-btn { display: grid; place-items: center; width: 31px; height: 22px; border: 1px solid #666; border-color: #666 #444 #2a2a2a; border-radius: 3px; background: linear-gradient(#565656, #414141); }
.object-pick { display: flex; align-items: center; gap: 8px; padding-right: 2px; }
.object-pick .field { flex: 1; width: 0; }
.vec { display: grid; grid-template-columns: repeat(3, minmax(0, 1fr)); gap: 5px; }
.vec label { display: flex; align-items: center; gap: 4px; }
.vec .field { flex: 1; width: 0; padding: 0 2px; }

.logo { display: flex; align-items: center; height: 17px; padding-top: 3px; font: bold 17px/14px Roboto, sans-serif; text-shadow: 0 0 1px #000, 1px 1px 0 #111; }
.logo-do { color: #1587b0; margin-left: 2px; }
.logo-tween { color: #8fd43c; }
h3 { margin: 5px 0 1px; padding-top: 1px; font-size: 12px; line-height: 17px; white-space: nowrap; }
.hints { padding: 3px 0 2px; line-height: 13px; }
.hints li { display: flex; align-items: center; gap: 4px; height: 13px; white-space: nowrap; }
.info { padding-top: 1px; line-height: 17px; }
.group { padding-bottom: 5px; }

.status { display: flex; align-items: center; gap: 4px; height: 23px; padding: 4px 3px 0; white-space: nowrap; overflow: hidden; flex: none; }
```
